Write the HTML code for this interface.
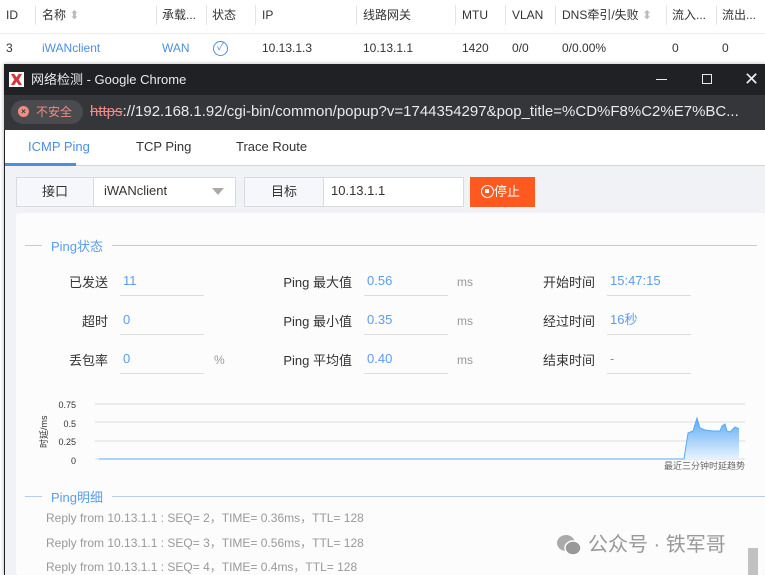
<!DOCTYPE html>
<html><head><meta charset="utf-8"><style>
*{margin:0;padding:0;box-sizing:border-box}
body{width:765px;height:575px;overflow:hidden;background:#fff;font-family:"Liberation Sans","Noto Sans CJK SC",sans-serif;font-size:12px;color:#333;position:relative}
.a{position:absolute;white-space:nowrap}
.hd{top:0;height:30px;line-height:30px;font-size:12px;color:#333}
.sep{position:absolute;top:5px;width:1px;height:20px;background:#e5e5e5}
.row{top:35px;height:26px;line-height:26px}
.blue{color:#4a90e2}
.lbl{text-align:right;width:80px;font-size:13px;color:#333}
.val{font-size:13px;color:#5b9bf0;border-bottom:1px solid #ddd;height:28px;line-height:26px;padding-left:3px;width:84px}
.ms{font-size:12px;color:#999}
.log{font-size:12px;color:#999;left:46px}
</style></head><body>
<div class="a hd" style="left:6px">ID</div>
<div class="sep" style="left:35px"></div>
<div class="a hd" style="left:42px">名称 <span style="color:#bbb">⬍</span></div>
<div class="sep" style="left:156px"></div>
<div class="a hd" style="left:162px">承载...</div>
<div class="sep" style="left:206px"></div>
<div class="a hd" style="left:212px">状态</div>
<div class="sep" style="left:255px"></div>
<div class="a hd" style="left:262px">IP</div>
<div class="sep" style="left:356px"></div>
<div class="a hd" style="left:363px">线路网关</div>
<div class="sep" style="left:455px"></div>
<div class="a hd" style="left:462px">MTU</div>
<div class="sep" style="left:505px"></div>
<div class="a hd" style="left:512px">VLAN</div>
<div class="sep" style="left:555px"></div>
<div class="a hd" style="left:562px">DNS牵引/失败 <span style="color:#bbb">⬍</span></div>
<div class="sep" style="left:666px"></div>
<div class="a hd" style="left:672px">流入...</div>
<div class="sep" style="left:716px"></div>
<div class="a hd" style="left:722px">流出...</div>
<div class="a" style="left:0;top:33px;width:765px;height:1px;background:#eee"></div>
<div class="a row" style="left:6px">3</div>
<div class="a row blue" style="left:42px">iWANclient</div>
<div class="a row blue" style="left:162px">WAN</div>
<div class="a" style="left:213px;top:41px;width:15px;height:15px;border:1.5px solid #4a90e2;border-radius:50%;color:#4a90e2;font-size:10px;line-height:12px;text-align:center">✓</div>
<div class="a row" style="left:262px">10.13.1.3</div>
<div class="a row" style="left:363px">10.13.1.1</div>
<div class="a row" style="left:462px">1420</div>
<div class="a row" style="left:512px">0/0</div>
<div class="a row" style="left:562px">0/0.00%</div>
<div class="a row" style="left:672px">0</div>
<div class="a row" style="left:722px">0</div>

<div class="a" style="left:4px;top:64px;width:761px;height:511px;background:#202124;box-shadow:0 0 4px rgba(0,0,0,.3)"></div>
<div class="a" style="left:9px;top:72px;width:15px;height:15px;background:#fff"><div style="position:absolute;left:2px;top:2px;width:11px;height:11px;background:#d33;clip-path:polygon(0 0,30% 0,50% 30%,70% 0,100% 0,70% 50%,100% 100%,70% 100%,50% 70%,30% 100%,0 100%,30% 50%)"></div></div>
<div class="a" style="left:31px;top:71px;color:#e8eaed;font-size:13px;line-height:18px">网络检测 - Google Chrome</div>
<div class="a" style="left:656px;top:79px;width:11px;height:1px;background:#e8eaed"></div>
<div class="a" style="left:702px;top:74px;width:10px;height:10px;border:1px solid #e8eaed"></div>
<div class="a" style="left:744px;top:68px;color:#e8eaed;font-size:18px;line-height:22px">✕</div>
<div class="a" style="left:4px;top:95px;width:761px;height:35px;background:#35363a"></div>
<div class="a" style="left:11px;top:100px;width:72px;height:24px;border-radius:12px;background:#4a4b4f"></div>
<div class="a" style="left:18px;top:106px;width:11px;height:11px;border-radius:50%;background:#f28b82;color:#35363a;font-size:8px;line-height:11px;text-align:center;font-weight:bold">×</div>
<div class="a" style="left:36px;top:104px;color:#f28b82;font-size:12px;line-height:16px">不安全</div>
<div class="a" style="left:90px;top:102px;color:#e8eaed;font-size:15px;line-height:20px"><span style="color:#f28b82;text-decoration:line-through">https</span>://192.168.1.92/cgi-bin/common/popup?v=1744354297&amp;pop_title=%CD%F8%C2%E7%BC...</div>

<div class="a" style="left:5px;top:130px;width:760px;height:445px;background:#f0f2f5"></div>
<div class="a" style="left:5px;top:130px;width:760px;height:36px;background:#fff;border-bottom:1px solid #c7d9f0"></div>
<div class="a" style="left:5px;top:163px;width:71px;height:3px;background:#4a90e2"></div>
<div class="a" style="left:28px;top:139px;font-size:13px;color:#4a90e2">ICMP Ping</div>
<div class="a" style="left:136px;top:139px;font-size:13px;color:#333">TCP Ping</div>
<div class="a" style="left:236px;top:139px;font-size:13px;color:#333">Trace Route</div>

<div class="a" style="left:16px;top:177px;width:220px;height:30px;border:1px solid #d6dbe3;background:#fff"></div>
<div class="a" style="left:16px;top:177px;width:78px;height:30px;border:1px solid #d6dbe3;background:#f5f7fa;text-align:center;line-height:28px;font-size:13px">接口</div>
<div class="a" style="left:104px;top:183px;font-size:13px">iWANclient</div>
<div class="a" style="left:212px;top:188px;width:0;height:0;border-left:6px solid transparent;border-right:6px solid transparent;border-top:7px solid #aaa"></div>
<div class="a" style="left:244px;top:177px;width:220px;height:30px;border:1px solid #d6dbe3;background:#fff"></div>
<div class="a" style="left:244px;top:177px;width:80px;height:30px;border:1px solid #d6dbe3;background:#f5f7fa;text-align:center;line-height:28px;font-size:13px">目标</div>
<div class="a" style="left:331px;top:183px;font-size:13px">10.13.1.1</div>
<div class="a" style="left:470px;top:177px;width:65px;height:30px;background:#fe5a1f;color:#fff;font-size:13px;line-height:30px;padding-left:11px"><span style="display:inline-block;width:13px;height:13px;border:1.5px solid #fff;border-radius:50%;vertical-align:-2px;position:relative"><span style="position:absolute;left:3px;top:3px;width:4px;height:4px;background:#fff"></span></span>停止</div>

<div class="a" style="left:16px;top:213px;width:749px;height:362px;background:#fcfcfd;border-radius:3px"></div>
<div class="a" style="left:25px;top:245px;width:17px;height:1px;background:#b8cce8"></div>
<div class="a" style="left:51px;top:236px;font-size:13px;color:#5b9bf0">Ping状态</div>
<div class="a" style="left:112px;top:245px;width:645px;height:1px;background:#b8cce8"></div>

<div class="a lbl" style="left:28px;top:272px">已发送</div><div class="a val" style="left:120px;top:268px">11</div>
<div class="a lbl" style="left:28px;top:311px">超时</div><div class="a val" style="left:120px;top:307px">0</div>
<div class="a lbl" style="left:28px;top:350px">丢包率</div><div class="a val" style="left:120px;top:346px">0</div>
<div class="a ms" style="left:214px;top:353px">%</div>
<div class="a lbl" style="left:272px;top:272px">Ping 最大值</div><div class="a val" style="left:364px;top:268px">0.56</div><div class="a ms" style="left:457px;top:275px">ms</div>
<div class="a lbl" style="left:272px;top:311px">Ping 最小值</div><div class="a val" style="left:364px;top:307px">0.35</div><div class="a ms" style="left:457px;top:314px">ms</div>
<div class="a lbl" style="left:272px;top:350px">Ping 平均值</div><div class="a val" style="left:364px;top:346px">0.40</div><div class="a ms" style="left:457px;top:353px">ms</div>
<div class="a lbl" style="left:515px;top:272px">开始时间</div><div class="a val" style="left:607px;top:268px">15:47:15</div>
<div class="a lbl" style="left:515px;top:311px">经过时间</div><div class="a val" style="left:607px;top:307px">16秒</div>
<div class="a lbl" style="left:515px;top:350px">结束时间</div><div class="a val" style="left:607px;top:346px">-</div>

<svg class="a" style="left:0;top:390px" width="765" height="85">
<g font-family="Liberation Sans" font-size="9" fill="#333" text-anchor="end">
<text x="76" y="18">0.75</text><text x="76" y="37">0.5</text><text x="76" y="55">0.25</text><text x="76" y="74">0</text></g>
<text x="0" y="0" transform="translate(47,58) rotate(-90)" font-size="9" fill="#333" font-family="Liberation Sans,Noto Sans CJK SC">时延/ms</text>
<g stroke="#ddd" stroke-width="1"><line x1="95" y1="14" x2="745" y2="14"/><line x1="95" y1="32" x2="745" y2="32"/><line x1="95" y1="51" x2="745" y2="51"/><line x1="95" y1="69" x2="745" y2="69"/></g>
<defs><linearGradient id="g" x1="0" y1="0" x2="0" y2="1"><stop offset="0" stop-color="#5aaaf5"/><stop offset="1" stop-color="#e8f3fd"/></linearGradient></defs>
<path d="M99 69 L684 69 L688 43 L693 41 L697 28 L700 38 L705 40 L713 41 L720 41 L722 36 L725 34 L727 41 L730 42 L735 37 L739 39 L739 69 Z" fill="url(#g)"/>
<path d="M99 69 L684 69 L688 43 L693 41 L697 28 L700 38 L705 40 L713 41 L720 41 L722 36 L725 34 L727 41 L730 42 L735 37 L739 39" fill="none" stroke="#5aaaf5" stroke-width="1"/>
<text x="745" y="79" font-size="9" fill="#666" text-anchor="end" font-family="Liberation Sans,Noto Sans CJK SC">最近三分钟时延趋势</text>
</svg>

<div class="a" style="left:25px;top:496px;width:17px;height:1px;background:#b8cce8"></div>
<div class="a" style="left:51px;top:487px;font-size:13px;color:#5b9bf0">Ping明细</div>
<div class="a" style="left:112px;top:496px;width:653px;height:1px;background:#b8cce8"></div>
<div class="a" style="left:16px;top:511px;width:749px;height:64px;overflow:hidden">
<div class="a log" style="left:30px;top:-2px">Reply from 10.13.1.1 : SEQ= 2，TIME= 0.36ms，TTL= 128</div>
<div class="a log" style="left:30px;top:23px">Reply from 10.13.1.1 : SEQ= 3，TIME= 0.56ms，TTL= 128</div>
<div class="a log" style="left:30px;top:47px">Reply from 10.13.1.1 : SEQ= 4，TIME= 0.4ms，TTL= 128</div>
</div>
<div class="a" style="left:748px;top:548px;width:10px;height:27px;background:#c1c1c1"></div>
<svg class="a" style="left:556px;top:534px" width="26" height="22"><ellipse cx="10" cy="9" rx="9" ry="8" fill="#aaa"/><ellipse cx="17" cy="14" rx="8" ry="7" fill="#999" stroke="#fff" stroke-width="1.5"/></svg>
<div class="a" style="left:588px;top:533px;font-size:20px;line-height:24px;color:#999">公众号 · 铁军哥</div>
</body></html>
